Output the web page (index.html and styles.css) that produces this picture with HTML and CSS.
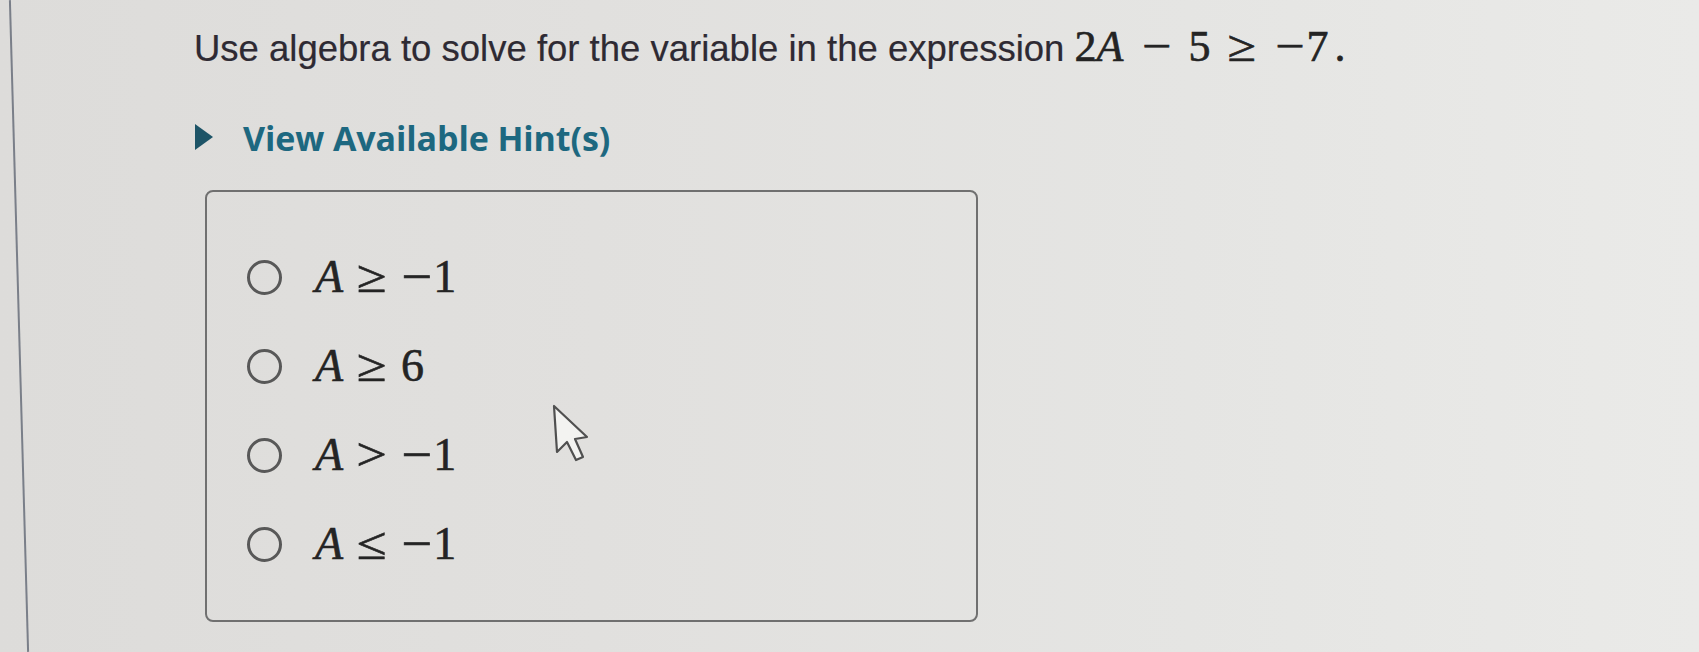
FILE: index.html
```html
<!DOCTYPE html>
<html lang="en">
<head>
<meta charset="utf-8">
<title>Solve the inequality</title>
<link rel="stylesheet" href="styles.css">
</head>
<body>
<div class="screen">
  <div class="edge"></div>
  <main class="content">
    <p class="question">Use algebra to solve for the variable in the expression <span class="math q-math"><span class="num">2</span><i class="var">A</i><span class="bin">−</span><span class="num">5</span><span class="rel">≥</span><span class="neg">−</span><span class="num">7</span><span class="dot">.</span></span></p>

    <div class="hint"><span class="tri"></span><span class="hint-text">View Available Hint(s)</span></div>

    <div class="choices">
      <div class="choice"><span class="radio"></span><span class="math"><i class="var">A</i><span class="rel">≥</span><span class="neg">−</span><span class="num">1</span></span></div>
      <div class="choice"><span class="radio"></span><span class="math"><i class="var">A</i><span class="rel">≥</span><span class="num">6</span></span></div>
      <div class="choice"><span class="radio"></span><span class="math"><i class="var">A</i><span class="rel">&gt;</span><span class="neg">−</span><span class="num">1</span></span></div>
      <div class="choice"><span class="radio"></span><span class="math"><i class="var">A</i><span class="rel">≤</span><span class="neg">−</span><span class="num">1</span></span></div>

      <svg class="cursor" width="40" height="60" viewBox="0 0 40 60" aria-hidden="true">
        <path d="M2 2 L5 48 L15 38 L24 56 L31 53 L23 35 L35 33 Z" fill="#f3f3f1" stroke="#505050" stroke-width="2.2" stroke-linejoin="round"/>
      </svg>
    </div>
  </main>
</div>
</body>
</html>
```

FILE: styles.css
```css
html, body {
  margin: 0;
  padding: 0;
  height: 100%;
}

body {
  overflow: hidden;
  background: linear-gradient(90deg, #dddcda 0%, #e1e0de 35%, #e5e5e3 70%, #eaeae8 100%);
  font-family: "Liberation Sans", Arial, sans-serif;
  color: #2e2a33;
}

.screen {
  display: flex;
  height: 652px;
}

.edge {
  flex: none;
  width: 2px;
  margin-left: 18px;
  background: #7a7f89;
  transform: rotate(-1.6deg);
}

.content {
  flex: 1;
  padding: 26px 0 0 174px;
}

.question {
  margin: 0;
  font-size: 36.5px;
  line-height: 42px;
  white-space: nowrap;
  -webkit-text-stroke: 0.2px #2e2a33;
}

.math {
  font-family: "Liberation Serif", "Times New Roman", serif;
  color: #242424;
  white-space: nowrap;
  -webkit-text-stroke: 0.6px #242424;
}

.var {
  font-style: italic;
}

.bin, .rel, .neg {
  display: inline-block;
  text-align: center;
  transform: scaleX(1.18);
}

.q-math {
  font-size: 44px;
}

.q-math .bin {
  width: .72em;
  margin: 0 .36em 0 .4em;
}

.q-math .rel {
  width: .72em;
  margin: 0 .36em;
}

.q-math .neg {
  width: .74em;
}

.q-math .dot {
  margin-left: .14em;
}

.hint {
  display: flex;
  align-items: center;
  margin-top: 48px;
  height: 40px;
}

.tri {
  flex: none;
  width: 0;
  height: 0;
  margin-left: 1px;
  margin-right: 30px;
  margin-top: -2px;
  border-left: 18px solid #1d5467;
  border-top: 13.5px solid transparent;
  border-bottom: 13.5px solid transparent;
}

.hint-text {
  font-family: "Open Sans", "Liberation Sans", sans-serif;
  font-weight: 700;
  font-size: 34px;
  line-height: 40px;
  color: #1d6880;
  letter-spacing: -0.1px;
}

.choices {
  position: relative;
  box-sizing: border-box;
  width: 773px;
  height: 432px;
  margin: 32px 0 0 11px;
  padding: 60px 0 51px 40px;
  border: 2px solid #707070;
  border-radius: 8px;
  display: flex;
  flex-direction: column;
  gap: 39px;
}

.choice {
  display: flex;
  align-items: center;
  height: 50px;
}

.radio {
  flex: none;
  box-sizing: border-box;
  width: 35px;
  height: 35px;
  border: 3px solid #585858;
  border-radius: 50%;
  margin-right: 33px;
}

.choice .math {
  font-size: 46px;
  line-height: 50px;
}

.choice .rel {
  width: .72em;
  margin: 0 .28em 0 .26em;
}

.choice .neg {
  width: .7em;
}

.cursor {
  position: absolute;
  left: 345px;
  top: 212px;
}
```
